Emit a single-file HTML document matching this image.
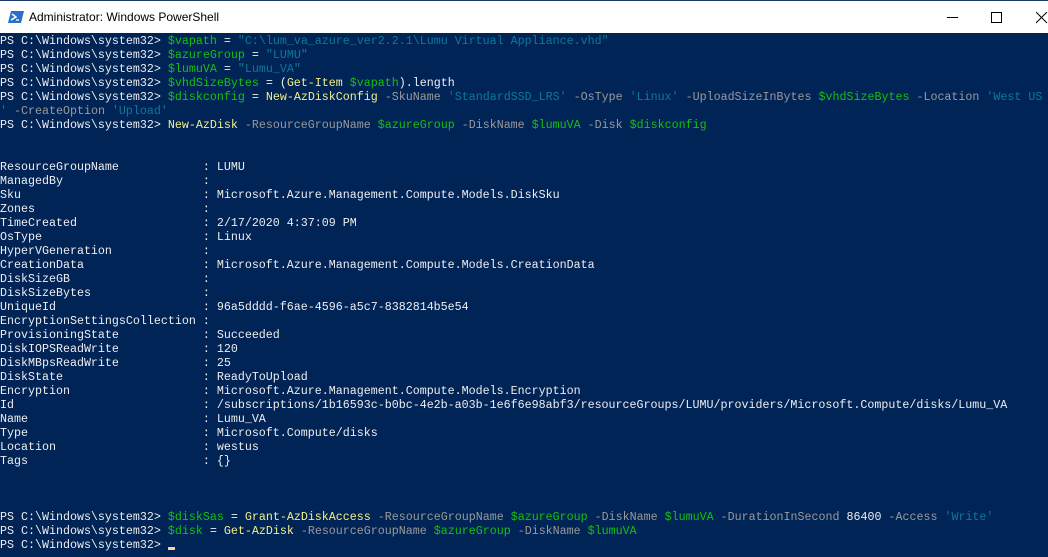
<!DOCTYPE html>
<html><head><meta charset="utf-8"><style>
html,body{margin:0;padding:0;width:1048px;height:557px;overflow:hidden;background:#012456}
#title{position:absolute;left:0;top:0;width:1048px;height:33px;background:#fff;border-top:1px solid #1b3a66;box-sizing:border-box;z-index:2}
#title .t{position:absolute;left:29px;top:9px;font:12px "Liberation Sans",sans-serif;color:#000}
#term{position:absolute;left:0;top:34px;width:1048px;height:523px;background:#012456}
pre{margin:0;font-family:"Liberation Mono",monospace;font-size:11.67px;line-height:14px;color:#eeedf0;white-space:pre}
.v{color:#13c10e}.s{color:#0b7a9b}.p{color:#9a9a9a}.c{color:#f2f08a}
.cur{display:inline-block;width:7px;height:3px;background:#f9d3a0;vertical-align:-2px}
</style></head><body>
<div id="title">
<svg style="position:absolute;left:8px;top:9px" width="16" height="14" viewBox="0 0 16 14"><polygon points="3,1 16,1 13,13 0,13" fill="#2a6fc9"/><path d="M4,4 L8,7 L3,10" stroke="#fff" stroke-width="1.5" fill="none"/><path d="M8,10 H11" stroke="#fff" stroke-width="1.3"/></svg>
<div class="t">Administrator: Windows PowerShell</div>
<svg style="position:absolute;left:947px;top:16px" width="12" height="2"><rect width="11" height="1" fill="#000"/></svg>
<svg style="position:absolute;left:991px;top:11px" width="12" height="12"><rect x="0.5" y="0.5" width="10" height="10" fill="none" stroke="#000"/></svg>
<svg style="position:absolute;left:1036px;top:11px" width="12" height="12"><path d="M0,0 L11,11 M11,0 L0,11" stroke="#000" stroke-width="1"/></svg>
</div>
<div id="term"><pre>PS C:\Windows\system32&gt; <span class="v">$vapath</span> = <span class="s">"C:\lum_va_azure_ver2.2.1\Lumu Virtual Appliance.vhd"</span>
PS C:\Windows\system32&gt; <span class="v">$azureGroup</span> = <span class="s">"LUMU"</span>
PS C:\Windows\system32&gt; <span class="v">$lumuVA</span> = <span class="s">"Lumu_VA"</span>
PS C:\Windows\system32&gt; <span class="v">$vhdSizeBytes</span> = (<span class="c">Get-Item</span> <span class="v">$vapath</span>).length
PS C:\Windows\system32&gt; <span class="v">$diskconfig</span> = <span class="c">New-AzDiskConfig</span> <span class="p">-SkuName</span> <span class="s">'StandardSSD_LRS'</span> <span class="p">-OsType</span> <span class="s">'Linux'</span> <span class="p">-UploadSizeInBytes</span> <span class="v">$vhdSizeBytes</span> <span class="p">-Location</span> <span class="s">'West US</span>
<span class="s">'</span> <span class="p">-CreateOption</span> <span class="s">'Upload'</span>
PS C:\Windows\system32&gt; <span class="c">New-AzDisk</span> <span class="p">-ResourceGroupName</span> <span class="v">$azureGroup</span> <span class="p">-DiskName</span> <span class="v">$lumuVA</span> <span class="p">-Disk</span> <span class="v">$diskconfig</span>


ResourceGroupName            : LUMU
ManagedBy                    :
Sku                          : Microsoft.Azure.Management.Compute.Models.DiskSku
Zones                        :
TimeCreated                  : 2/17/2020 4:37:09 PM
OsType                       : Linux
HyperVGeneration             :
CreationData                 : Microsoft.Azure.Management.Compute.Models.CreationData
DiskSizeGB                   :
DiskSizeBytes                :
UniqueId                     : 96a5dddd-f6ae-4596-a5c7-8382814b5e54
EncryptionSettingsCollection :
ProvisioningState            : Succeeded
DiskIOPSReadWrite            : 120
DiskMBpsReadWrite            : 25
DiskState                    : ReadyToUpload
Encryption                   : Microsoft.Azure.Management.Compute.Models.Encryption
Id                           : /subscriptions/1b16593c-b0bc-4e2b-a03b-1e6f6e98abf3/resourceGroups/LUMU/providers/Microsoft.Compute/disks/Lumu_VA
Name                         : Lumu_VA
Type                         : Microsoft.Compute/disks
Location                     : westus
Tags                         : {}



PS C:\Windows\system32&gt; <span class="v">$diskSas</span> = <span class="c">Grant-AzDiskAccess</span> <span class="p">-ResourceGroupName</span> <span class="v">$azureGroup</span> <span class="p">-DiskName</span> <span class="v">$lumuVA</span> <span class="p">-DurationInSecond</span> 86400 <span class="p">-Access</span> <span class="s">'Write'</span>
PS C:\Windows\system32&gt; <span class="v">$disk</span> = <span class="c">Get-AzDisk</span> <span class="p">-ResourceGroupName</span> <span class="v">$azureGroup</span> <span class="p">-DiskName</span> <span class="v">$lumuVA</span>
PS C:\Windows\system32&gt; <span class="cur"></span></pre></div>
</body></html>
